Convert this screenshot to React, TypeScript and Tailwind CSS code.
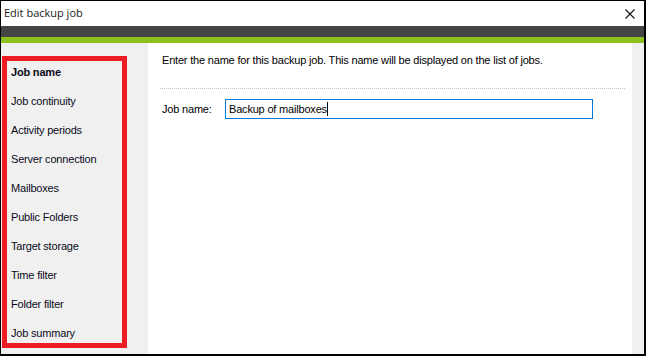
import React from 'react';

const steps = [
  'Job name',
  'Job continuity',
  'Activity periods',
  'Server connection',
  'Mailboxes',
  'Public Folders',
  'Target storage',
  'Time filter',
  'Folder filter',
  'Job summary',
];

export default function App() {
  return (
    <div className="w-[646px] h-[356px] flex flex-col bg-white border-t border-l border-r-2 border-b-2 border-black overflow-hidden font-['Liberation_Sans',Arial,sans-serif] text-[11px] tracking-[-0.19px] text-black">
      {/* title bar */}
      <div className="h-[25px] shrink-0 flex items-center justify-between pl-[3px] pr-[9px] tracking-normal">
        <span className="font-['Open_Sans',sans-serif] text-[11px] text-[#1a1a1a]">Edit backup job</span>
        <svg width="10" height="10" viewBox="0 0 10 10" className="mt-[1px]">
          <path d="M0.5 0.5 L9.5 9.5 M9.5 0.5 L0.5 9.5" stroke="#111" strokeWidth="1.1" fill="none" />
        </svg>
      </div>
      <div className="h-[11px] shrink-0 bg-[#444444]" />
      <div className="h-[6px] shrink-0 bg-[#8fbf1f]" />

      {/* body */}
      <div className="flex-1 flex min-h-0">
        <div className="w-[147px] shrink-0 bg-[#f0f0f0] pt-[13px] pl-[1px]">
          <div className="w-[125px] h-[292px] border-[5px] border-[#ed1c24] pt-[3px] pl-[4px] flex flex-col gap-[13px]">
            {steps.map((s, i) => (
              <div key={s} className={`h-[16px] leading-[16px] text-[#0a0a1a] ${i === 0 ? 'font-bold' : ''}`}>
                {s}
              </div>
            ))}
          </div>
        </div>

        <div className="flex-1 bg-white flex flex-col pt-[9px] pl-[12px] pr-[7px]">
          <div className="pl-[2px] h-[16px] leading-[16px]">
            Enter the name for this backup job. This name will be displayed on the list of jobs.
          </div>
          <div className="mt-[20px] border-t border-dotted border-[#c4c4c4]" />
          <div className="mt-[10px] flex items-center">
            <span className="pl-[2px] w-[65px]">Job name:</span>
            <div className="w-[368px] h-[20px] border border-[#0078d7] flex items-center pl-[3px]">
              <span>Backup of mailboxes</span>
              <span className="w-[1px] h-[14px] bg-black" />
            </div>
          </div>
        </div>

        <div className="w-[12px] shrink-0 bg-[#f0f0f0]" />
      </div>
    </div>
  );
}
